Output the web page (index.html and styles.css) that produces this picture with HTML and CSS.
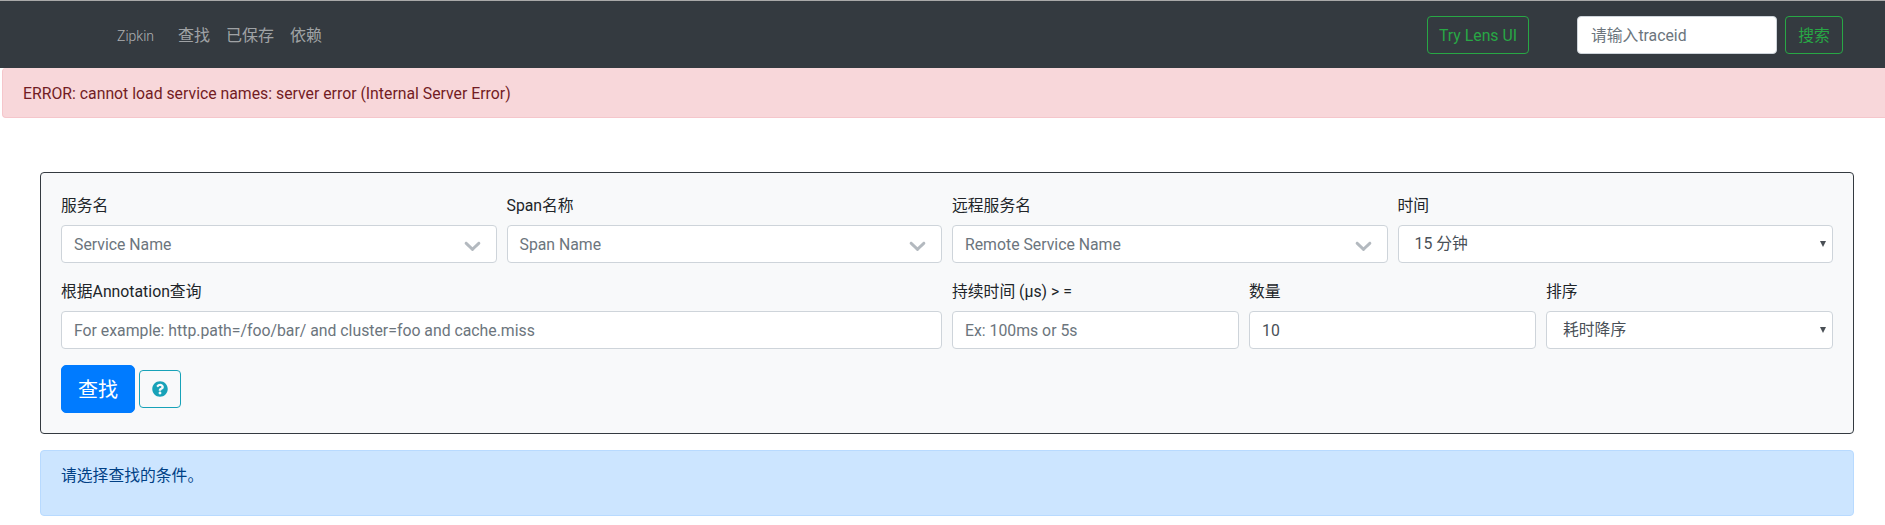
FILE: index.html
```html
<!DOCTYPE html>
<html lang="zh">
<head>
<meta charset="utf-8">
<title>Zipkin</title>
<link rel="stylesheet" href="styles.css">
</head>
<body>
<nav class="navbar">
  <a class="brand">Zipkin</a>
  <a class="nav-link">查找</a>
  <a class="nav-link">已保存</a>
  <a class="nav-link">依赖</a>
  <button class="btn btn-green lens" type="button">Try Lens UI</button>
  <input class="trace-input" type="text" placeholder="请输入traceid">
  <button class="btn btn-green search" type="button">搜索</button>
</nav>
<div class="alert alert-error">ERROR: cannot load service names: server error (Internal Server Error)</div>
<main class="content">
  <form class="panel">
    <div class="row">
      <div class="field col-3"><label>服务名</label>
        <div class="combo"><span class="combo-text">Service Name</span>
          <svg class="chevron" width="27" height="27" viewBox="0 0 20 20"><path d="M4.516 7.548c.436-.446 1.043-.481 1.576 0L10 11.295l3.908-3.747c.533-.481 1.141-.446 1.574 0 .436.445.408 1.197 0 1.615-.406.418-4.695 4.502-4.695 4.502a1.095 1.095 0 0 1-1.576 0S4.924 9.581 4.516 9.163c-.409-.418-.436-1.17 0-1.615z"/></svg>
        </div>
      </div>
      <div class="field col-3"><label>Span名称</label>
        <div class="combo"><span class="combo-text">Span Name</span>
          <svg class="chevron" width="27" height="27" viewBox="0 0 20 20"><path d="M4.516 7.548c.436-.446 1.043-.481 1.576 0L10 11.295l3.908-3.747c.533-.481 1.141-.446 1.574 0 .436.445.408 1.197 0 1.615-.406.418-4.695 4.502-4.695 4.502a1.095 1.095 0 0 1-1.576 0S4.924 9.581 4.516 9.163c-.409-.418-.436-1.17 0-1.615z"/></svg>
        </div>
      </div>
      <div class="field col-3"><label>远程服务名</label>
        <div class="combo"><span class="combo-text">Remote Service Name</span>
          <svg class="chevron" width="27" height="27" viewBox="0 0 20 20"><path d="M4.516 7.548c.436-.446 1.043-.481 1.576 0L10 11.295l3.908-3.747c.533-.481 1.141-.446 1.574 0 .436.445.408 1.197 0 1.615-.406.418-4.695 4.502-4.695 4.502a1.095 1.095 0 0 1-1.576 0S4.924 9.581 4.516 9.163c-.409-.418-.436-1.17 0-1.615z"/></svg>
        </div>
      </div>
      <div class="field col-3"><label>时间</label>
        <div class="select-wrap"><select class="control select"><option>15 分钟</option></select></div>
      </div>
      <div class="field col-6"><label>根据Annotation查询</label>
        <input class="control" type="text" placeholder="For example: http.path=/foo/bar/ and cluster=foo and cache.miss">
      </div>
      <div class="field col-2"><label>持续时间 (μs) &gt; =</label>
        <input class="control" type="text" placeholder="Ex: 100ms or 5s">
      </div>
      <div class="field col-2"><label>数量</label>
        <input class="control" type="text" value="10">
      </div>
      <div class="field col-2"><label>排序</label>
        <div class="select-wrap"><select class="control select"><option>耗时降序</option></select></div>
      </div>
    </div>
    <div class="actions">
      <button class="btn btn-primary" type="button">查找</button>
      <button class="btn btn-help" type="button" aria-label="帮助">
        <svg width="16" height="16" viewBox="0 0 512 512"><path fill="#17a2b8" d="M504 256c0 136.997-111.043 248-248 248S8 392.997 8 256C8 119.083 119.043 8 256 8s248 111.083 248 248zM262.655 90c-54.497 0-89.255 22.957-116.549 63.758-3.536 5.286-2.353 12.415 2.715 16.258l34.699 26.31c5.205 3.947 12.621 3.008 16.665-2.122 17.864-22.658 30.113-35.797 57.303-35.797 20.429 0 45.698 13.148 45.698 32.958 0 14.976-12.363 22.667-32.534 33.976C247.128 238.528 216 254.941 216 296v4c0 6.627 5.373 12 12 12h56c6.627 0 12-5.373 12-12v-1.333c0-28.462 83.186-29.647 83.186-106.667 0-58.002-60.165-102-116.531-102zM256 338c-25.365 0-46 20.635-46 46 0 25.364 20.635 46 46 46s46-20.636 46-46c0-25.365-20.635-46-46-46z"/></svg>
      </button>
    </div>
  </form>
  <div class="alert alert-info">请选择查找的条件。</div>
</main>
</body>
</html>
```
FILE: styles.css
```css
* { box-sizing: border-box; }
html, body { margin: 0; padding: 0; }
body {
  background: #fff;
  color: #212529;
  font-family: Roboto, "Noto Sans CJK SC", sans-serif;
  font-size: 15.8px;
  line-height: 24px;
  border-top: 1px solid #a9a9a9;
}
.navbar {
  display: flex;
  align-items: center;
  height: 67px;
  background: #343a40;
  padding: 0 42px 0 117px;
}
.brand { width: 61px; padding-top: 2px; color: rgba(255,255,255,.6); font-size: 14px; font-weight: 300; }
.nav-link { padding-top: 2px; color: rgba(255,255,255,.55); font-size: 16px; margin-right: 16px; }
.btn {
  font: inherit;
  height: 38px;
  padding: 0 12px;
  border-radius: 4px;
  border: 1px solid transparent;
  background: transparent;
}
.btn-green { border-color: #28a745; color: #28a745; }
.lens { margin-left: auto; width: 102px; padding: 2px 0 0; margin-right: 48px; }
.search { width: 58px; padding: 2px 0 0; }
.trace-input {
  width: 200px;
  height: 38px;
  margin-right: 8px;
  padding: 2px 13px 0;
  border: 1px solid #ced4da;
  border-radius: 4px;
  font: inherit;
  color: #495057;
  background: #fff;
}
.trace-input::placeholder, .control::placeholder { color: #6c757d; opacity: 1; }
.alert { border: 1px solid transparent; border-radius: 4px; }
.alert-error {
  margin-left: 2px;
  height: 50px;
  padding: 14px 20px 0;
  background: #f8d7da;
  border-color: #f5c6cb;
  border-right: 0;
  border-top: 0;
  border-radius: 4px 0 0 4px;
  color: #721c24;
}
.content { padding: 54px 31px 0 40px; }
.panel {
  height: 262px;
  padding: 20px;
  background: #f8f9fa;
  border: 1px solid #343a40;
  border-radius: 4px;
}
.row { display: grid; grid-template-columns: repeat(12, 1fr); column-gap: 10px; row-gap: 16px; }
.col-2 { grid-column: span 2; }
.col-3 { grid-column: span 3; }
.col-6 { grid-column: span 6; }
.field label { display: block; height: 24px; margin-bottom: 8px; padding-top: 1px; color: #212529; }
.control, .combo {
  display: block;
  width: 100%;
  height: 38px;
  padding: 0 12px;
  background: #fff;
  border: 1px solid #ced4da;
  border-radius: 4px;
  font: inherit;
  color: #495057;
}
.select-wrap { position: relative; }
.select-wrap::after {
  content: "";
  position: absolute;
  top: 16px;
  right: 7px;
  border-style: solid;
  border-width: 6px 3.5px 0;
  border-color: #4a4f55 transparent transparent;
}
.select { appearance: none; -webkit-appearance: none; padding-left: 16px; }
.combo { display: flex; align-items: center; justify-content: space-between; padding-top: 2px; padding-right: 10px; }
.combo-text { color: #6c757d; }
.chevron { fill: #b3b9bf; }
.actions { display: flex; align-items: center; gap: 4px; margin-top: 16px; }
.btn-primary {
  width: 74px;
  height: 48px;
  padding: 2px 0 0;
  background: #007bff;
  border-color: #007bff;
  color: #fff;
  font-size: 20px;
  border-radius: 5px;
}
.btn-help {
  display: flex;
  align-items: center;
  justify-content: center;
  width: 42px;
  padding: 0;
  border-color: #17a2b8;
}
.alert-info {
  margin-top: 16px;
  height: 66px;
  padding: 13px 20px 0;
  background: #cce5ff;
  border-color: #b8daff;
  color: #004085;
}
```
